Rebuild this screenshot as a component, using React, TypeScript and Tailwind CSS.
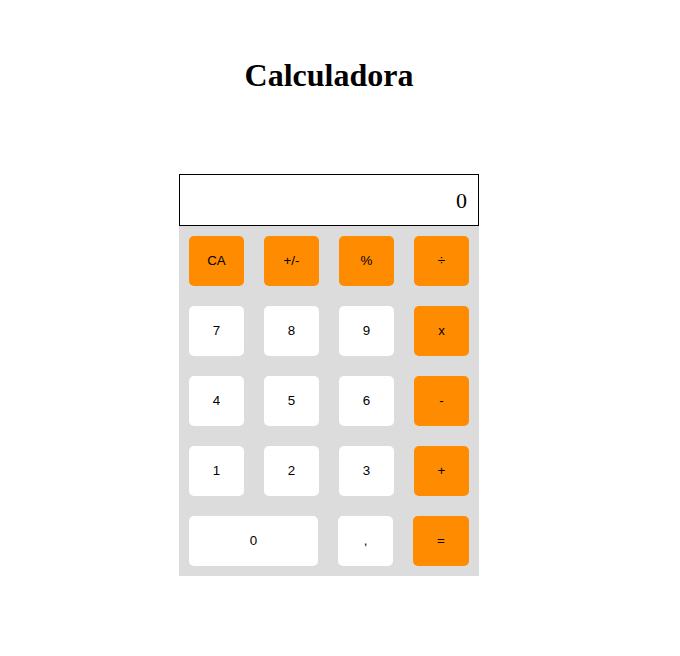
const keys: { label: string; op?: boolean; w?: string }[][] = [
  [{ label: 'CA', op: true }, { label: '+/-', op: true }, { label: '%', op: true }, { label: '÷', op: true }],
  [{ label: '7' }, { label: '8' }, { label: '9' }, { label: 'x', op: true }],
  [{ label: '4' }, { label: '5' }, { label: '6' }, { label: '-', op: true }],
  [{ label: '1' }, { label: '2' }, { label: '3' }, { label: '+', op: true }],
];

function Key({ label, op, w = 'w-[55px]' }: { label: string; op?: boolean; w?: string }) {
  return (
    <button
      className={`${w} h-[50px] rounded-[5px] text-[13.333px] text-black ${
        op ? 'bg-[#ff8c00]' : 'bg-white'
      }`}
    >
      {label}
    </button>
  );
}

export default function App() {
  return (
    <div className="w-[680px] h-[656px] bg-white font-['Liberation_Sans',Arial,sans-serif]">
      <div className="w-[658px] flex flex-col items-center">
        <h1 className="mt-[58px] text-[32px] leading-[35px] font-bold font-['Liberation_Serif','Times_New_Roman',serif] text-black">
          Calculadora
        </h1>

        <div className="mt-[81px] w-[300px]">
          {/* display */}
          <div className="h-[52px] border border-black bg-white flex items-center justify-end pr-[11px] text-[22px] font-['Liberation_Serif','Times_New_Roman',serif]">
            0
          </div>

          {/* keypad */}
          <div className="bg-[#dcdcdc] p-[10px] flex flex-col gap-5">
            {keys.map((row, i) => (
              <div key={i} className="flex gap-5">
                {row.map((k) => (
                  <Key key={k.label} label={k.label} op={k.op} />
                ))}
              </div>
            ))}
            <div className="flex">
              <Key label="0" w="w-[129px]" />
              <div className="ml-5">
                <Key label="," />
              </div>
              <div className="ml-5">
                <Key label="=" op w="w-[56px]" />
              </div>
            </div>
          </div>
        </div>
      </div>
    </div>
  );
}
